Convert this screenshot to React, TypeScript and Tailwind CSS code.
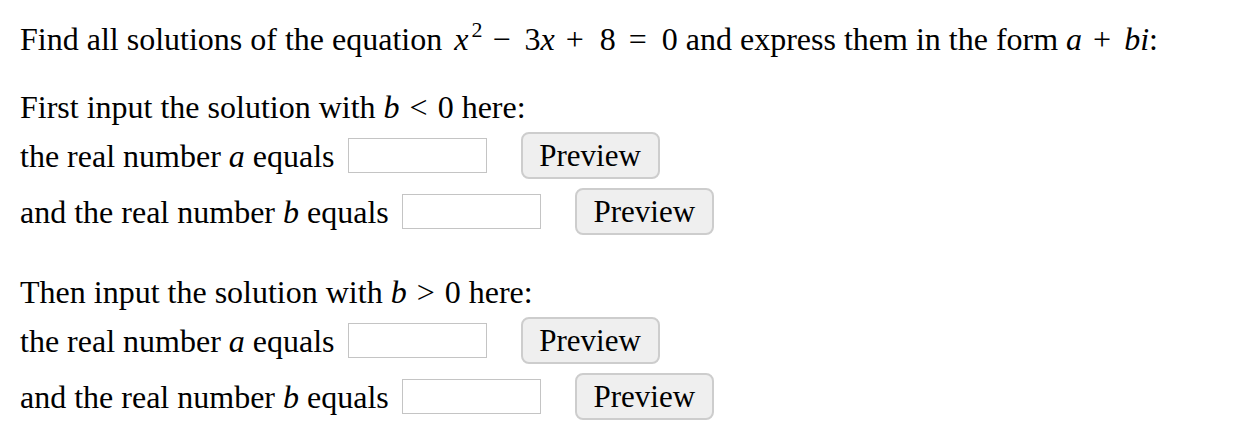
import React from "react";

function V({ children }: { children: React.ReactNode }) {
  return <span className="italic">{children}</span>;
}

function AnswerRow({ label, variable }: { label: string; variable: string }) {
  return (
    <div className="flex h-[47px] items-center">
      <span>
        {label} <V>{variable}</V> equals
      </span>
      <input
        type="text"
        className="ml-[13px] h-[35px] w-[139px] border border-[#c4c4c4] bg-white px-1 outline-none"
      />
      <button
        type="button"
        className="ml-[34px] h-[47px] w-[139px] rounded-[8px] border-2 border-[#cdcdcd] bg-[#efefef] text-[31px] leading-none"
      >
        Preview
      </button>
    </div>
  );
}

function SolutionBlock({ lead, sign }: { lead: string; sign: string }) {
  return (
    <div>
      <p>
        {lead} solution with <V>b</V>
        <span className="mx-[10px]">{sign}</span>0 here:
      </p>
      <div className="mt-2 flex flex-col gap-[9px]">
        <AnswerRow label="the real number" variable="a" />
        <AnswerRow label="and the real number" variable="b" />
      </div>
    </div>
  );
}

export default function App() {
  return (
    <div className="min-h-screen bg-white px-5 pt-[22px] font-['Liberation_Serif',serif] text-[32px] leading-[34px] text-black">
      <p>
        Find all solutions of the equation{" "}
        <span className="ml-[4px]">
          <V>x</V>
        </span>
        <sup className="relative -top-[3px] ml-[3px] align-top text-[22px] leading-none">2</sup>
        <span className="ml-[10px] mr-[14px]">−</span>3<V>x</V>
        <span className="ml-[11px] mr-[16px]">+</span>8
        <span className="ml-[13px] mr-[15px]">=</span>0 and express them in the form{" "}
        <V>a</V>
        <span className="ml-[11px] mr-[13px]">+</span>
        <V>bi</V>:
      </p>
      <div className="mt-[34px] flex flex-col gap-[40px]">
        <SolutionBlock lead="First input the" sign="<" />
        <SolutionBlock lead="Then input the" sign=">" />
      </div>
    </div>
  );
}
